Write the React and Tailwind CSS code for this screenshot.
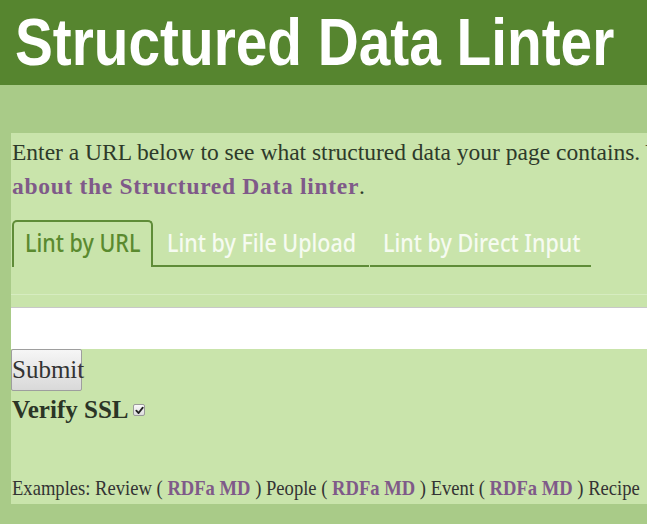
import React from "react";

function Check() {
  return (
    <span className="ml-[5px] inline-flex h-[12px] w-[12px] items-center justify-center rounded-[2px] border border-[#9a9a9a] bg-gradient-to-b from-[#fafafa] to-[#dcdcdc] align-middle">
      <svg width="9" height="9" viewBox="0 0 10 10">
        <path d="M1.5 5.2 L4 7.8 L8.6 1.8" fill="none" stroke="#222" strokeWidth="2" strokeLinecap="round" strokeLinejoin="round" />
      </svg>
    </span>
  );
}

export default function App() {
  const serif = { fontFamily: '"Liberation Serif", "Times New Roman", serif' };
  return (
    <div className="min-h-[524px] w-full overflow-hidden bg-[#a9cb88]" style={serif}>
      <header className="h-[85px] bg-[#56852f] pl-[15px] pt-[9px]">
        <h1
          className="inline-block origin-left scale-x-[0.86] whitespace-nowrap text-[66px] font-bold leading-[66px] text-white"
          style={{ fontFamily: '"Liberation Sans", Arial, sans-serif' }}
        >
          Structured Data Linter
        </h1>
      </header>

      <div className="pl-[11px] pt-[48px]">
        <main className="h-[371px] w-[700px] bg-[#c9e4ab] pt-[2px] text-[#2e3a2a]">
          <p className="pl-[1px] text-[23.5px] leading-[34px] whitespace-nowrap">
            Enter a URL below to see what structured data your page contains. You can also{" "}
            <br />
            <a className="font-bold tracking-[0.7px] text-[#7f5a89]" href="#">about the Structured Data linter</a>.
          </p>

          <div className="mt-[17px] flex pl-[1px]" style={{ fontFamily: '"Noto Sans", "Open Sans", sans-serif' }}>
            <div className="h-[47px] w-[141px] rounded-t-[5px] border-2 border-b-0 border-[#5f8c38] pl-[11px] pt-[3px]">
              <span className="inline-block origin-left scale-x-[0.86] whitespace-nowrap text-[25px] font-medium leading-[34px] text-[#5a8a2f]">Lint by URL</span>
            </div>
            <div className="h-[47px] w-[216px] border-b-2 border-[#5f8c38] pl-[14px] pt-[5px]">
              <span className="inline-block origin-left scale-x-[0.86] whitespace-nowrap text-[25px] font-medium leading-[34px] text-[#f6fbf1]">Lint by File Upload</span>
            </div>
            <div className="ml-[1px] h-[47px] w-[221px] border-b-2 border-[#5f8c38] pl-[13px] pt-[5px]">
              <span className="inline-block origin-left scale-x-[0.86] whitespace-nowrap text-[25px] font-medium leading-[34px] text-[#f6fbf1]">Lint by Direct Input</span>
            </div>
          </div>

          <div className="mt-[27px] border-t border-[#d6ecc0] pt-[12px]">
            <input
              type="text"
              className="block h-[42px] w-[700px] border-t border-[#c8c8c8] bg-white outline-none"
            />
            <button
              type="button"
              className="block h-[42px] w-[71px] rounded-[2px] border border-[#9e9e9e] bg-gradient-to-b from-[#f6f6f6] to-[#d9d9d9] text-[25px] leading-[30px] text-[#333]"
              style={serif}
            >
              Submit
            </button>
            <div className="mt-[4px] flex items-center pl-[1px]">
              <span className="text-[25px] font-bold leading-[30px] text-[#2b3526]">Verify SSL</span>
              <Check />
            </div>
            <p className="mt-[50px] pl-[1px] whitespace-nowrap text-[22px] leading-[26px] text-[#333]">
              <span className="inline-block origin-left scale-x-[0.845]">
                Examples: Review ({" "}
                <a className="font-bold text-[#7f5a89]" href="#">RDFa MD</a> ) People ({" "}
                <a className="font-bold text-[#7f5a89]" href="#">RDFa MD</a> ) Event ({" "}
                <a className="font-bold text-[#7f5a89]" href="#">RDFa MD</a> ) Recipe
              </span>
            </p>
          </div>
        </main>
      </div>
    </div>
  );
}
